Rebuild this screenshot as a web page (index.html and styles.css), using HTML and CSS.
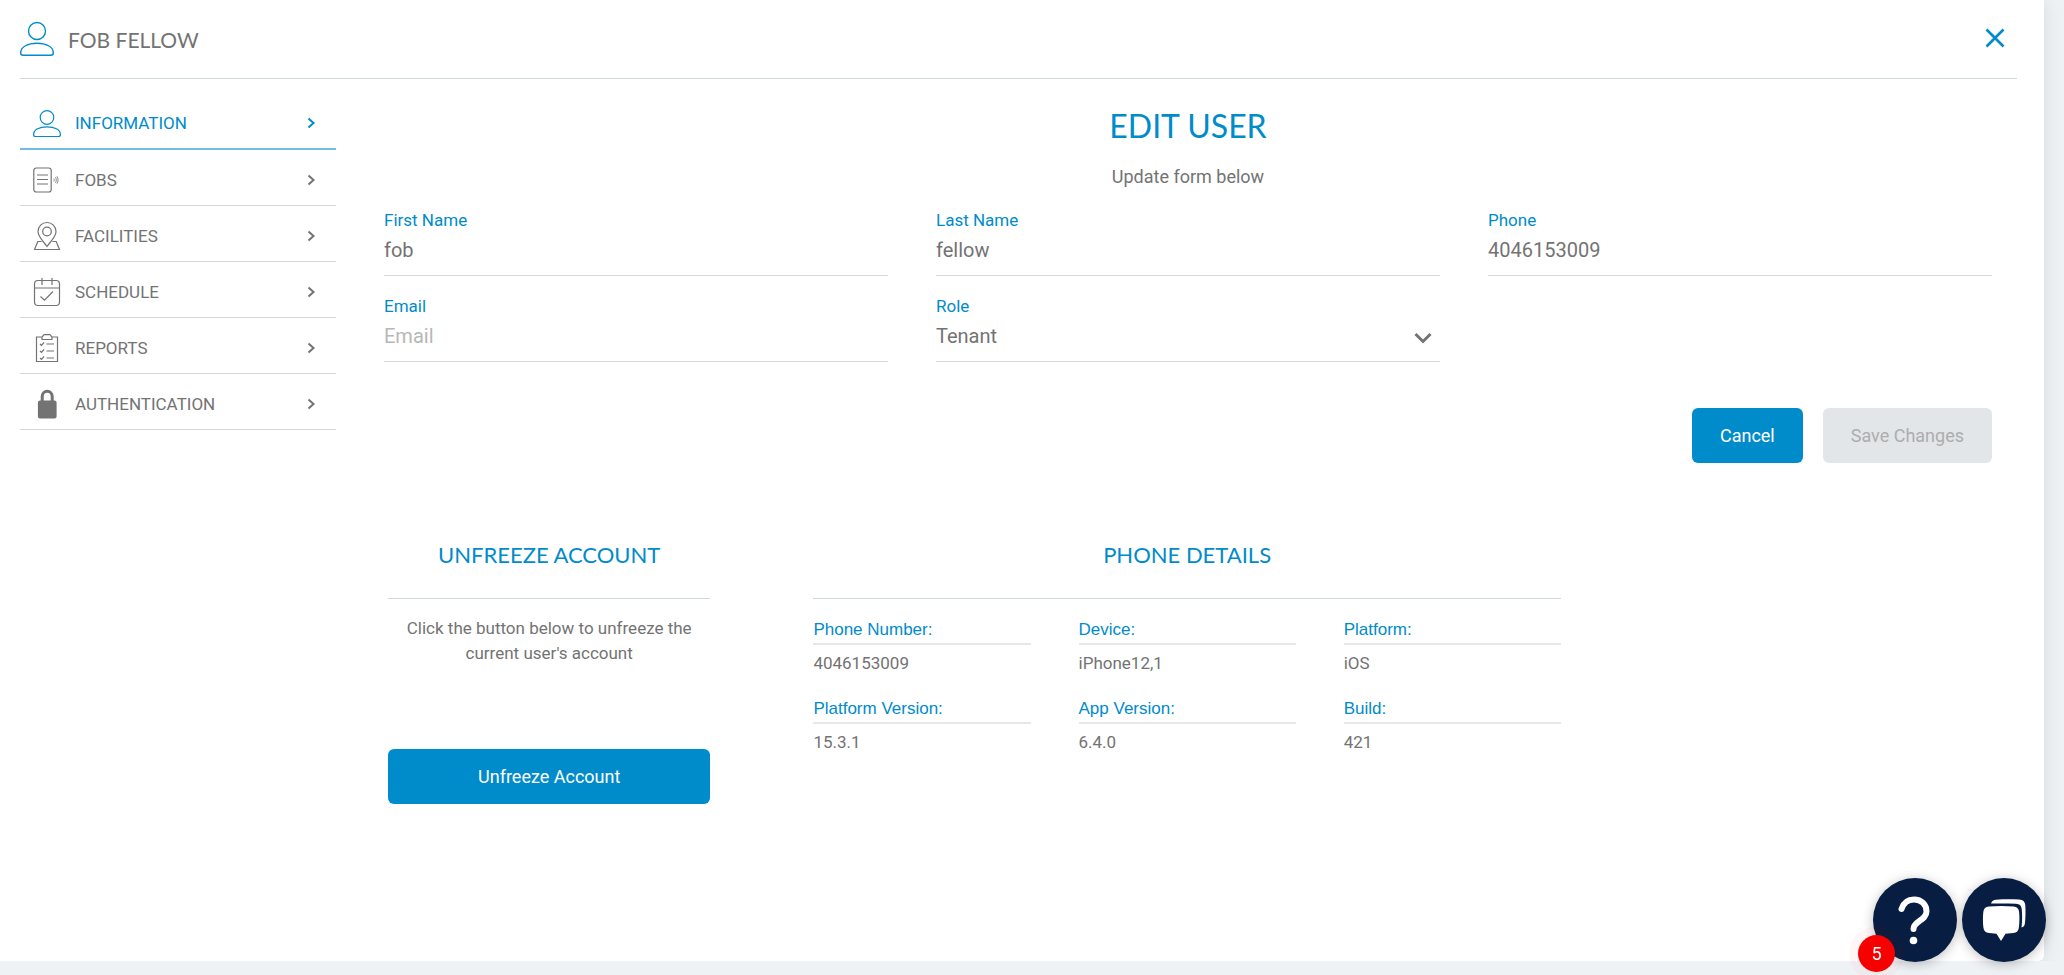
FILE: index.html
```html
<!DOCTYPE html>
<html lang="en">
<head>
    <meta charset="UTF-8">
    <meta name="viewport" content="width=device-width, initial-scale=1.0">
    <title>Edit User - Fob Fellow</title>
    <link rel="stylesheet" href="styles.css">
</head>
<body>
    <div class="card">
        <header class="card-header">
            <svg class="header-icon" viewBox="0 0 34 34">
                <circle cx="17" cy="9" r="8.5"/>
                <path d="M3 33.300h28c1.600 0 2.300-1 2.300-2.500 0-6-7.300-9.600-16.300-9.600S.7 24.800.7 30.800c0 1.500.7 2.500 2.300 2.500z"/>
            </svg>
            <h1>FOB FELLOW</h1>
            <button class="close" type="button" aria-label="Close">
                <svg viewBox="0 0 20 20"><path d="M1.500 1.500l17 17M18.500 1.500l-17 17"/></svg>
            </button>
        </header>

        <div class="content">
            <nav class="sidebar">
                <a href="#information" class="active">
                    <svg class="icon" viewBox="0 -1 28 28">
                        <circle cx="14" cy="7.500" r="6.800"/>
                        <path d="M2.500 26.500h23c1.300 0 1.900-.8 1.900-2 0-4.900-6-7.700-13.400-7.700S.6 19.600.6 24.500c0 1.200.6 2 1.900 2z"/>
                    </svg>
                    <span>INFORMATION</span>
                    <svg class="arrow" viewBox="0 0 8 12"><path d="M1.500 1.500L6.500 6l-5 4.500"/></svg>
                </a>
                <a href="#fobs">
                    <svg class="icon" viewBox="0 0 28 28">
                        <rect x=".8" y="2" width="17.400" height="24" rx="2.500"/>
                        <path d="M4 9h11M4 13.500h11M4 18h11"/>
                        <path class="waves" d="M20.800 12.500c.6 1 .6 2 0 3M22.500 11c1 1.700 1 4.300 0 6M24 10.200c1.400 2.200 1.400 5.500 0 7.500"/>
                    </svg>
                    <span>FOBS</span>
                    <svg class="arrow" viewBox="0 0 8 12"><path d="M1.500 1.500L6.500 6l-5 4.500"/></svg>
                </a>
                <a href="#facilities">
                    <svg class="icon" viewBox="0 0 28 28">
                        <path d="M14 24.500C11 20 5 15 5 9.500a9 9 0 0 1 18 0C23 15 17 20 14 24.500z"/>
                        <circle cx="14" cy="9.500" r="4.300"/>
                        <path d="M8.500 19.500H4.800L1.500 27.500h25l-3.300-8h-3.700"/>
                    </svg>
                    <span>FACILITIES</span>
                    <svg class="arrow" viewBox="0 0 8 12"><path d="M1.500 1.500L6.500 6l-5 4.500"/></svg>
                </a>
                <a href="#schedule">
                    <svg class="icon" viewBox="0 0 28 28">
                        <rect x="1.500" y="2.500" width="25" height="25" rx="3.500"/>
                        <path d="M1.500 10h25M9 0v7M19 0v7M7.500 18.500l4 3.700 8.500-8.700"/>
                    </svg>
                    <span>SCHEDULE</span>
                    <svg class="arrow" viewBox="0 0 8 12"><path d="M1.500 1.500L6.500 6l-5 4.500"/></svg>
                </a>
                <a href="#reports">
                    <svg class="icon" viewBox="0 0 28 28">
                        <path d="M9 3H3.500v24.500h21V3H19M9 5.500V3l2-2.300h6L19 3v2.500z"/>
                        <path d="M13.500 10h7.500M13.500 17h7.500M13.500 24h7.500"/>
                        <path d="M7 10l1.500 1.300 2.500-2.800M7 17l1.500 1.300 2.500-2.800M7 24l1.500 1.300 2.500-2.800"/>
                    </svg>
                    <span>REPORTS</span>
                    <svg class="arrow" viewBox="0 0 8 12"><path d="M1.500 1.500L6.500 6l-5 4.500"/></svg>
                </a>
                <a href="#authentication">
                    <svg class="icon lock" viewBox="0 0 28 28">
                        <rect x="5.500" y="11" width="17.500" height="17" rx="1.500"/>
                        <path d="M9.200 12V6.500a5 5.300 0 0 1 10 0V12"/>
                    </svg>
                    <span>AUTHENTICATION</span>
                    <svg class="arrow" viewBox="0 0 8 12"><path d="M1.500 1.500L6.500 6l-5 4.500"/></svg>
                </a>
            </nav>

            <main>
                <h2>EDIT USER</h2>
                <p class="subtitle">Update form below</p>

                <form>
                    <div class="fields">
                        <div class="field">
                            <label for="first-name">First Name</label>
                            <input type="text" id="first-name" value="fob">
                        </div>
                        <div class="field">
                            <label for="last-name">Last Name</label>
                            <input type="text" id="last-name" value="fellow">
                        </div>
                        <div class="field">
                            <label for="phone">Phone</label>
                            <input type="tel" id="phone" value="4046153009">
                        </div>
                        <div class="field">
                            <label for="email">Email</label>
                            <input type="email" id="email" placeholder="Email">
                        </div>
                        <div class="field">
                            <label for="role">Role</label>
                            <select id="role">
                                <option>Tenant</option>
                            </select>
                            <svg class="select-arrow" viewBox="0 0 18 12"><path d="M1.500 2L9 9.500 16.500 2"/></svg>
                        </div>
                    </div>
                    <div class="actions">
                        <button type="button" class="btn">Cancel</button>
                        <button type="submit" class="btn" disabled>Save Changes</button>
                    </div>
                </form>

                <div class="panels">
                    <section class="unfreeze">
                        <h3>UNFREEZE ACCOUNT</h3>
                        <p>Click the button below to unfreeze the current user's account</p>
                        <button type="button" class="btn">Unfreeze Account</button>
                    </section>
                    <section class="phone-details">
                        <h3>PHONE DETAILS</h3>
                        <dl>
                            <div>
                                <dt>Phone Number:</dt>
                                <dd>4046153009</dd>
                            </div>
                            <div>
                                <dt>Device:</dt>
                                <dd>iPhone12,1</dd>
                            </div>
                            <div>
                                <dt>Platform:</dt>
                                <dd>iOS</dd>
                            </div>
                            <div>
                                <dt>Platform Version:</dt>
                                <dd>15.3.1</dd>
                            </div>
                            <div>
                                <dt>App Version:</dt>
                                <dd>6.4.0</dd>
                            </div>
                            <div>
                                <dt>Build:</dt>
                                <dd>421</dd>
                            </div>
                        </dl>
                    </section>
                </div>
            </main>
        </div>
    </div>

    <!-- Floating help and chat buttons -->
    <div class="floating">
        <button type="button" class="round" aria-label="Help">
            <svg viewBox="0 0 84 84">
                <path class="mark" d="M28.500 31C30.500 25 35 21.500 41 21.500c7.500 0 12.500 5 12.500 12 0 9-13 9.500-13 17.500"/>
                <circle cx="40.500" cy="62.500" r="3.800"/>
            </svg>
            <span class="badge">5</span>
        </button>
        <button type="button" class="round" aria-label="Chat">
            <svg viewBox="0 0 84 84">
                <path d="M29 25.500c1-2.500 2.500-3.500 5-3.700 7-.6 15-.6 23-.3 4 .2 6 2 6.300 6 .4 6 .3 13-.5 18.500-.3 2-1.300 3-3.300 3.500.8-6.500.8-13 .2-18.500-.3-3.500-2.200-5-5.700-5.200-8.500-.5-17-.5-25-.3z"/>
                <path d="M27 28.500c7.500-.8 17-.8 24.500 0 3.500.3 5.300 2.200 5.600 5.500.5 5 .4 10.500-.2 15.500-.4 3.500-2.200 5.200-5.600 5.500l-7.800.7-4.500 7.300-4.500-7.300-7.500-.7c-3.400-.3-5.200-2-5.600-5.500-.6-5-.6-10.500-.1-15.500.4-3.300 2.200-5.200 5.700-5.500z"/>
            </svg>
        </button>
    </div>
</body>
</html>
```
FILE: styles.css
```css
* {
    box-sizing: border-box;
    margin: 0;
    padding: 0;
}

body {
    font-family: Roboto, 'Liberation Sans', sans-serif;
    font-size: 17px;
    background-color: #eef2f5;
    color: #737373;
}

.card {
    min-height: calc(100vh - 14px);
    margin-right: 20px;
    padding: 0 27px 0 20px;
    background-color: #fff;
    border-radius: 0 0 6px 0;
    box-shadow: 0 0 20px rgba(0, 0, 0, 0.1);
}

svg {
    fill: none;
    stroke: currentColor;
    flex-shrink: 0;
    overflow: visible;
}

h1, h2, h3 {
    font-family: Lato, Roboto, sans-serif;
    font-weight: 400;
}

/* Header */
.card-header {
    display: flex;
    align-items: center;
    height: 79px;
    border-bottom: 1px solid #cfd8dc;
}

.header-icon {
    width: 34px;
    height: 34px;
    margin-right: 14px;
    color: #008bcb;
    stroke-width: 1.4;
}

h1 {
    padding-top: 1px;
    font-size: 21px;
}

.close {
    margin-left: auto;
    margin-right: 12px;
    padding-bottom: 2px;
    border: none;
    background: none;
    color: #008bcb;
    cursor: pointer;
}

.close svg {
    display: block;
    width: 20px;
    height: 20px;
    stroke-width: 2.6;
}

.content {
    display: flex;
    gap: 48px;
    padding-right: 25px;
}

/* Sidebar */
.sidebar {
    flex: 0 0 316px;
    padding-top: 15px;
}

.sidebar a {
    display: flex;
    align-items: center;
    height: 56px;
    padding: 4px 21px 0 13px;
    border-bottom: 1px solid #d5d9dc;
    color: #737373;
    text-decoration: none;
}

.sidebar a.active {
    color: #008bcb;
    border-bottom: 2px solid #70bce2;
}

.icon {
    width: 28px;
    height: 28px;
    margin-right: 14px;
    stroke-width: 1.2;
}

.waves {
    stroke-width: 0.8;
}

.lock rect {
    fill: currentColor;
}

.lock path {
    stroke-width: 3;
}

.arrow {
    width: 8px;
    height: 12px;
    margin-left: auto;
    stroke-width: 2;
}

/* Form */
main {
    flex: 1;
    min-width: 0;
}

h2 {
    padding-top: 23px;
    font-size: 32px;
    line-height: 48px;
    text-align: center;
    color: #008bcb;
}

.subtitle {
    margin: 15px 0 19px;
    font-size: 18px;
    line-height: 24px;
    text-align: center;
}

.fields {
    display: grid;
    grid-template-columns: repeat(3, 1fr);
    column-gap: 48px;
    row-gap: 18px;
}

.field {
    position: relative;
}

.field label {
    display: block;
    line-height: 24px;
    color: #008bcb;
}

.field input,
.field select {
    display: block;
    width: 100%;
    height: 44px;
    padding-bottom: 8px;
    border: none;
    border-bottom: 1px solid #d5d9dc;
    border-radius: 0;
    outline: none;
    background: none;
    color: #737373;
    font-family: inherit;
    font-size: 20px;
    appearance: none;
}

.field input::placeholder {
    color: #b7b7b7;
}

.select-arrow {
    position: absolute;
    right: 8px;
    bottom: 18px;
    width: 18px;
    height: 12px;
    stroke-width: 3;
    pointer-events: none;
}

.actions {
    display: flex;
    justify-content: flex-end;
    gap: 20px;
    margin-top: 46px;
}

.btn {
    height: 55px;
    padding: 0 28px;
    border: none;
    border-radius: 6px;
    background-color: #008bcb;
    color: #fff;
    font-family: inherit;
    font-size: 18px;
    cursor: pointer;
}

.btn:disabled {
    background-color: #e2e6e9;
    color: #adadad;
    cursor: default;
}

/* Bottom panels */
.panels {
    display: flex;
    gap: 103px;
    margin-top: 76px;
    padding-left: 4px;
}

h3 {
    height: 60px;
    border-bottom: 1px solid #cfd8dc;
    font-size: 22px;
    line-height: 32px;
    text-align: center;
    color: #008bcb;
}

.unfreeze {
    width: 20.1%;
}

.unfreeze p {
    height: 133px;
    margin-top: 17px;
    padding: 0 16px;
    line-height: 25px;
    text-align: center;
}

.unfreeze .btn {
    width: 100%;
}

.phone-details {
    width: 46.6%;
}

dl {
    display: grid;
    grid-template-columns: repeat(3, 1fr);
    gap: 22px 48px;
    margin-top: 19px;
}

dt {
    padding-bottom: 1px;
    border-bottom: 2px solid #e4e8eb;
    font-family: 'Liberation Sans', sans-serif;
    line-height: 24px;
    color: #008bcb;
}

dd {
    margin-top: 6px;
    line-height: 24px;
}

/* Floating buttons */
.floating {
    position: fixed;
    right: 18px;
    bottom: 13px;
    display: flex;
    gap: 5px;
}

.round {
    position: relative;
    width: 84px;
    height: 84px;
    border: none;
    border-radius: 50%;
    background-color: #071d41;
    box-shadow: 0 2px 12px rgba(0, 0, 0, 0.25);
    color: #fff;
    cursor: pointer;
}

.round svg {
    display: block;
    fill: #fff;
    stroke: none;
}

.round .mark {
    fill: none;
    stroke: #fff;
    stroke-width: 6;
    stroke-linecap: round;
}

.badge {
    position: absolute;
    left: -15px;
    bottom: -10px;
    width: 37px;
    height: 37px;
    border-radius: 50%;
    background-color: #f70000;
    box-shadow: 0 0 0 9px rgba(255, 0, 0, 0.03);
    font-family: Roboto, sans-serif;
    font-size: 18px;
    line-height: 37px;
}
```
